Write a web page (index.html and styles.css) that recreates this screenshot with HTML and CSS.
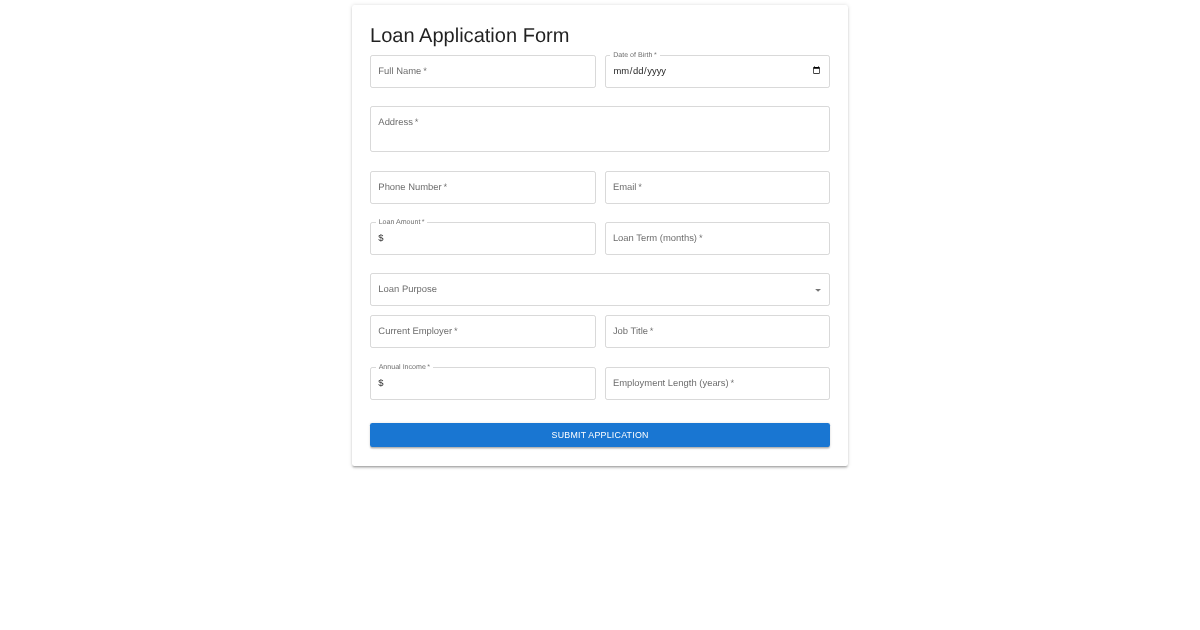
FILE: index.html
```html
<!DOCTYPE html>
<html lang="en">
<head>
<meta charset="utf-8">
<title>Loan Application Form</title>
<link rel="stylesheet" href="styles.css">
</head>
<body>
<main class="card">
  <h1 class="title">Loan Application Form</h1>
  <form class="form">
    <div class="row gap-after">
      <label class="field"><span class="label">Full Name&#8201;*</span></label>
      <label class="field"><span class="label small">Date of Birth&#8201;*</span><input class="date" type="date"></label>
    </div>
    <div class="row gap-after-lg">
      <label class="field tall"><span class="label">Address&#8201;*</span></label>
    </div>
    <div class="row gap-after">
      <label class="field"><span class="label">Phone Number&#8201;*</span></label>
      <label class="field"><span class="label">Email&#8201;*</span></label>
    </div>
    <div class="row gap-after">
      <label class="field"><span class="label small">Loan Amount&#8201;*</span><span class="value">$</span></label>
      <label class="field"><span class="label">Loan Term (months)&#8201;*</span></label>
    </div>
    <div class="row gap-after-sm">
      <label class="field"><span class="label">Loan Purpose</span>
        <svg class="caret" viewBox="0 0 24 24" width="24" height="24"><path d="M7 10l5 5 5-5z"/></svg>
      </label>
    </div>
    <div class="row gap-after-lg">
      <label class="field"><span class="label">Current Employer&#8201;*</span></label>
      <label class="field"><span class="label">Job Title&#8201;*</span></label>
    </div>
    <div class="row gap-after-xl">
      <label class="field"><span class="label small">Annual Income&#8201;*</span><span class="value">$</span></label>
      <label class="field"><span class="label">Employment Length (years)&#8201;*</span></label>
    </div>
    <button class="submit" type="button">Submit Application</button>
  </form>
</main>
</body>
</html>
```
FILE: styles.css
```css
* { box-sizing: border-box; }
html, body { margin: 0; height: 100%; background: #fff; }
body {
  display: flex;
  justify-content: center;
  align-items: flex-start;
  padding-top: 5px;
  font-family: "Liberation Sans", Arial, sans-serif;
  color: rgba(0,0,0,.87);
  overflow: hidden;
}
.card {
  flex: none;
  zoom: .59;
  width: 841px;
  height: 781px;
  padding: 32.5px 30.5px 0;
  background: #fff;
  border-radius: 4px;
  box-shadow: 0 3px 3px -2px rgba(0,0,0,.2), 0 3px 4px 0 rgba(0,0,0,.14), 0 1px 8px 0 rgba(0,0,0,.12);
  text-rendering: geometricPrecision;
  will-change: transform;
}
.title {
  margin: 0 0 10px;
  font-size: 34px;
  line-height: 42px;
  font-weight: 400;
  color: rgba(0,0,0,.87);
}
.form { display: flex; flex-direction: column; }
.row { display: flex; gap: 15px; }
.gap-after { margin-bottom: 30.5px; }
.gap-after-sm { margin-bottom: 15.5px; }
.gap-after-lg { margin-bottom: 32px; }
.gap-after-xl { margin-bottom: 39px; }
.field {
  position: relative;
  flex: 1 1 0;
  min-width: 0;
  height: 56px;
  display: flex;
  align-items: center;
  padding: 0 12.5px 2px;
  border: 1px solid rgba(0,0,0,.15);
  border-radius: 4px;
}
.field.tall { height: 78px; align-items: flex-start; padding-top: 14px; }
.label {
  font-size: 16px;
  line-height: 23px;
  color: rgba(0,0,0,.6);
}
.label.small {
  position: absolute;
  left: 8px;
  top: -10px;
  padding: 0 5px;
  font-size: 12px;
  line-height: 17px;
  background: #fff;
}
.value { font-size: 16px; color: rgba(0,0,0,.87); }
.date {
  flex: 1;
  min-width: 0;
  margin: 0 -1px 1px 0;
  border: 0;
  padding: 0;
  outline: 0;
  background: transparent;
  font: 16px "Liberation Sans", Arial, sans-serif;
  color: rgba(0,0,0,.87);
}
.caret { position: absolute; right: 7px; top: 15px; fill: rgba(0,0,0,.54); }
.submit {
  height: 41px;
  border: 0;
  border-radius: 4px;
  background: #1976d2;
  color: #fff;
  font: 500 15px "Liberation Sans", Arial, sans-serif;
  letter-spacing: .4px;
  text-transform: uppercase;
  box-shadow: 0 3px 1px -2px rgba(0,0,0,.2), 0 2px 2px 0 rgba(0,0,0,.14), 0 1px 5px 0 rgba(0,0,0,.12);
}
```
